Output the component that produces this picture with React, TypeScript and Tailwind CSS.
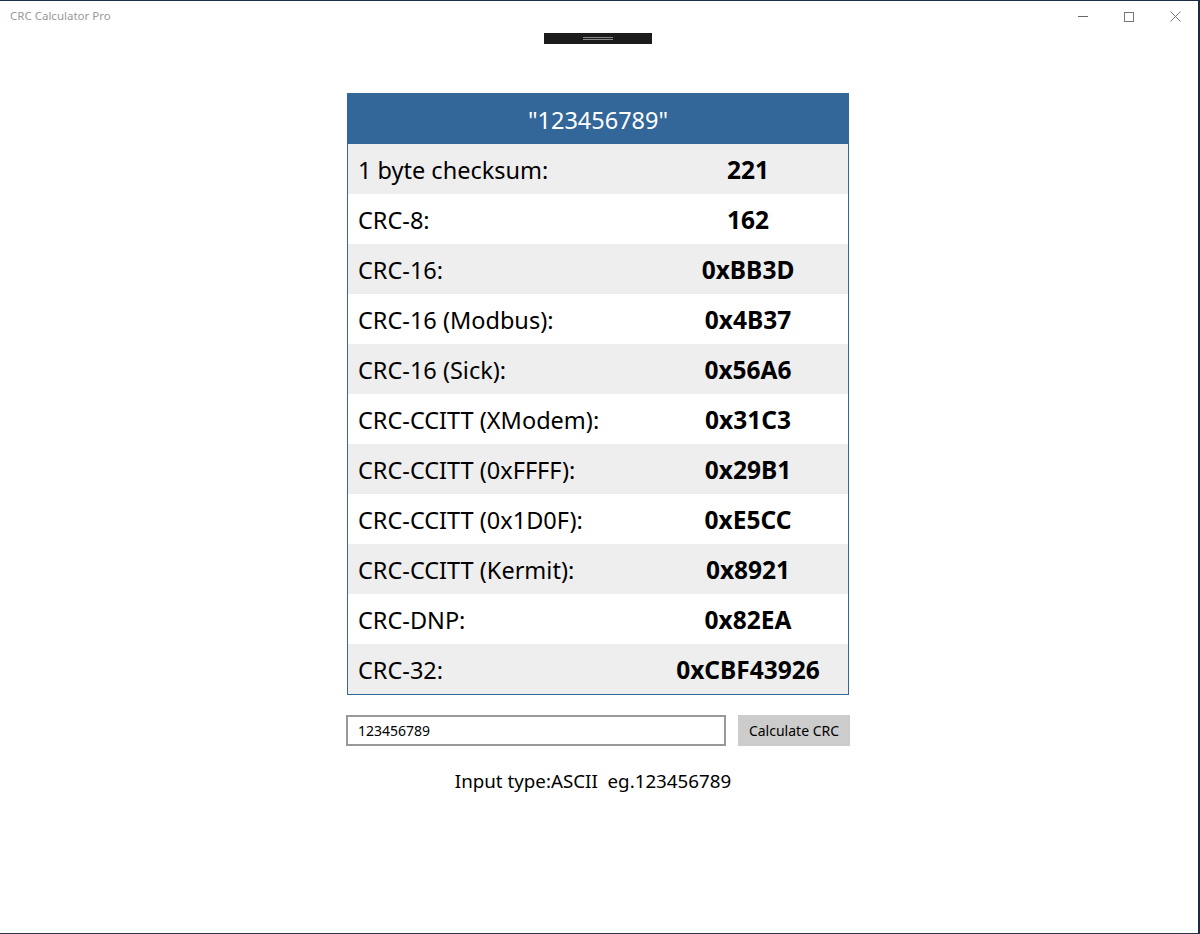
const rows: [string, string][] = [
  ['1 byte checksum:', '221'],
  ['CRC-8:', '162'],
  ['CRC-16:', '0xBB3D'],
  ['CRC-16 (Modbus):', '0x4B37'],
  ['CRC-16 (Sick):', '0x56A6'],
  ['CRC-CCITT (XModem):', '0x31C3'],
  ['CRC-CCITT (0xFFFF):', '0x29B1'],
  ['CRC-CCITT (0x1D0F):', '0xE5CC'],
  ['CRC-CCITT (Kermit):', '0x8921'],
  ['CRC-DNP:', '0x82EA'],
  ['CRC-32:', '0xCBF43926'],
]

export default function App() {
  return (
    <div className="h-[934px] w-[1200px] overflow-hidden border-t border-r-2 border-b border-t-[#1b2d44] border-r-[#1b2d44] border-b-[#2b3547] bg-white font-['Noto_Sans','Open_Sans',sans-serif] text-black">
      <div className="flex h-[31px] items-start">
        <div className="pl-[10px] pt-[9px] text-[11.5px] leading-none text-[#999]">CRC Calculator Pro</div>
        <div className="ml-auto flex">
          <div className="flex h-[31px] w-[46px] items-center justify-center">
            <div className="h-px w-[10px] bg-[#666]" />
          </div>
          <div className="flex h-[31px] w-[46px] items-center justify-center">
            <div className="h-[10px] w-[10px] border border-[#777]" />
          </div>
          <div className="flex h-[31px] w-[46px] items-center justify-center">
            <svg width="11" height="11" viewBox="0 0 11 11">
              <path d="M0.5 0.5L10.5 10.5M10.5 0.5L0.5 10.5" stroke="#777" strokeWidth="1" />
            </svg>
          </div>
        </div>
      </div>
      <div className="pr-[2px]">
        <div className="mt-[1px] flex justify-center">
          <div className="flex h-[11px] w-[108px] flex-col items-center justify-center gap-[1px] bg-[#1c1c1c]">
            <div className="h-px w-[30px] bg-[#888]" />
            <div className="h-px w-[30px] bg-[#888]" />
          </div>
        </div>
        <div className="mt-[49px] flex justify-center">
          <div className="w-[502px] border border-[#336699]">
            <div className="flex h-[50px] items-center justify-center bg-[#336699] pt-[3px] text-[23.5px] text-white">"123456789"</div>
            {rows.map(([label, value], i) => (
              <div key={label} className={`grid h-[50px] grid-cols-[300px_200px] items-center pt-[3px] ${i % 2 === 0 ? 'bg-[#eeeeee]' : 'bg-white'}`}>
                <div className="pl-[10px] text-[23.5px]">{label}</div>
                <div className="text-center text-[24.5px] font-bold">{value}</div>
              </div>
            ))}
          </div>
        </div>
        <div className="mt-[20px] flex justify-center gap-[12px]">
          <div className="flex h-[31px] w-[380px] items-center border-2 border-[#999] pl-[10px] text-[14px]">123456789</div>
          <div className="flex h-[31px] w-[112px] items-center justify-center bg-[#cccccc] text-[14px]">Calculate CRC</div>
        </div>
        <div className="mt-[21px] pr-[10px] text-center text-[18.75px]">Input type:ASCII&nbsp;&nbsp;eg.123456789</div>
      </div>
    </div>
  )
}
